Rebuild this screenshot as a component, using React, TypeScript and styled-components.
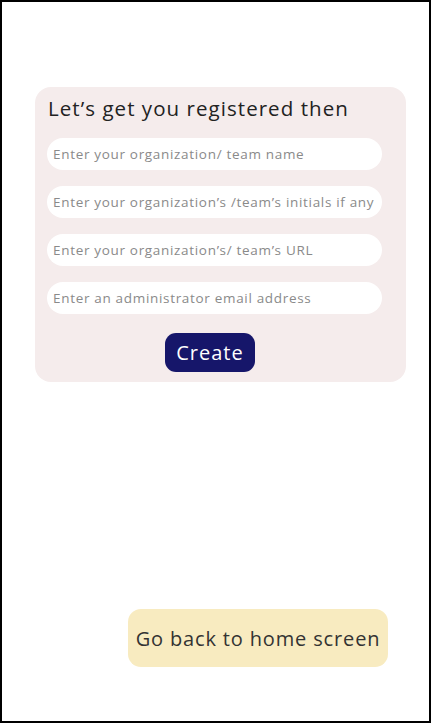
import { FC } from "react";
import styled, { createGlobalStyle } from "styled-components";

const GlobalStyle = createGlobalStyle`
  * {
    box-sizing: border-box;
  }
  body {
    margin: 0;
    background: #ffffff;
    font-family: "Open Sans", "Noto Sans", sans-serif;
  }
`;

const Frame = styled.div`
  width: 431px;
  height: 723px;
  border: 2px solid #000;
  padding: 85px 0 0 33px;
  display: flex;
  flex-direction: column;
  background: #fff;
`;

const Card = styled.form`
  width: 371px;
  height: 295px;
  background: #f5ecec;
  border-radius: 16px;
  padding: 9px 24px 0 12px;
  display: flex;
  flex-direction: column;
`;

const Heading = styled.h2`
  margin: 0 0 18px 1px;
  font-size: 20.5px;
  line-height: 24px;
  font-weight: 500;
  color: #222;
  letter-spacing: 1.05px;
  white-space: nowrap;
`;

const Fields = styled.div`
  display: flex;
  flex-direction: column;
  gap: 16px;
`;

const TextInput = styled.input`
  width: 335px;
  height: 32px;
  border: none;
  outline: none;
  border-radius: 16px;
  background: #fff;
  padding: 0 1px 0 6px;
  font-family: inherit;
  font-size: 13.5px;
  letter-spacing: 0.68px;
  color: #333;
  &::placeholder {
    color: #8a8a8a;
  }
`;

const CreateButton = styled.button`
  margin: 19px 0 0 118px;
  width: 90px;
  height: 39px;
  border: none;
  border-radius: 11px;
  background: #16166a;
  color: #fff;
  font-family: inherit;
  font-size: 20px;
  letter-spacing: 1px;
  cursor: pointer;
`;

const Footer = styled.div`
  display: flex;
  padding: 227px 0 0 93px;
`;

const HomeButton = styled.button`
  width: 260px;
  height: 58px;
  border: none;
  border-radius: 13px;
  background: #f8ebc0;
  color: #333;
  font-family: inherit;
  font-size: 20px;
  letter-spacing: 0.85px;
  white-space: nowrap;
  cursor: pointer;
`;

const fields = [
  "Enter your organization/ team name",
  "Enter your organization\u2019s /team\u2019s initials if any",
  "Enter your organization\u2019s/ team\u2019s URL",
  "Enter an administrator email address",
];

const App: FC = () => {
  return (
    <>
      <GlobalStyle />
      <Frame>
        <Card onSubmit={(e) => e.preventDefault()}>
          <Heading>Let’s get you registered then</Heading>
          <Fields>
            {fields.map((f) => (
              <TextInput key={f} type="text" placeholder={f} />
            ))}
          </Fields>
          <CreateButton type="submit">Create</CreateButton>
        </Card>
        <Footer>
          <HomeButton type="button">Go back to home screen</HomeButton>
        </Footer>
      </Frame>
    </>
  );
};

export default App;
